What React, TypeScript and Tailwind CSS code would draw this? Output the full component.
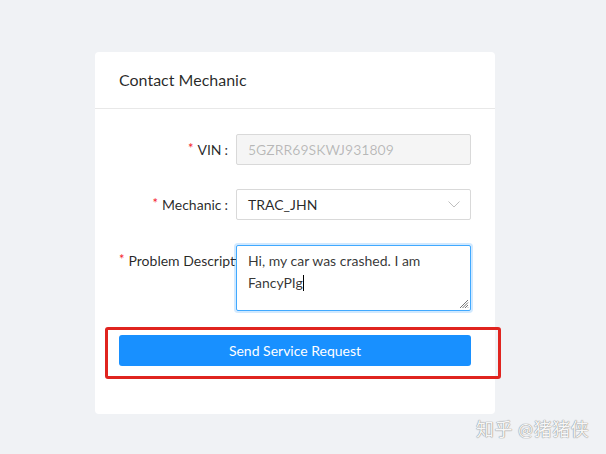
import React from 'react';

const font = { fontFamily: 'Lato, "Noto Sans CJK SC", sans-serif' };

const Label = ({ text }: { text: string }) => (
  <div className="w-[117px] shrink-0 h-[31px] flex items-center justify-end overflow-hidden whitespace-nowrap pr-[8px] text-[14px] text-black/85">
    <span className="text-[#f5222d] mr-[4px] text-[13px] -mt-[2px]">*</span>
    <span>{text}</span>
    <span className="ml-[3px]">:</span>
  </div>
);

const App = () => {
  return (
    <main className="relative w-[606px] h-[454px] bg-[#f0f2f5] pt-[52px] pl-[95px] overflow-hidden" style={font}>
      {/* Card */}
      <div className="w-[400px] h-[362px] bg-white rounded-[4px]">
        {/* Header */}
        <div className="h-[57px] px-[24px] flex items-center border-b border-[#e8e8e8]">
          <h1 className="text-[16px] text-black/85">Contact Mechanic</h1>
        </div>

        {/* Form */}
        <div className="px-[24px] pt-[25px]">
          <div className="flex items-start mb-[24px]">
            <Label text="VIN" />
            <div className="w-[235px] h-[31px] px-[11px] flex items-center bg-[#f5f5f5] border border-[#d9d9d9] rounded-[2px] text-[14px] text-black/25">
              5GZRR69SKWJ931809
            </div>
          </div>

          <div className="flex items-start mb-[25px]">
            <Label text="Mechanic" />
            <div className="w-[235px] h-[31px] pl-[11px] pr-[10px] flex items-center justify-between bg-white border border-[#d9d9d9] rounded-[2px] text-[14px] text-black/85">
              <span>TRAC_JHN</span>
              <svg width="12" height="7" viewBox="0 0 12 7" fill="none">
                <path d="M0.5 0.5 L6 6 L11.5 0.5" stroke="#bfbfbf" strokeWidth="1" />
              </svg>
            </div>
          </div>

          <div className="flex items-start mb-[24px]">
            <div className="w-[117px] shrink-0 h-[31px] flex items-center overflow-hidden whitespace-nowrap text-[14px] text-black/85">
              <span className="text-[#f5222d] mr-[4px] text-[13px] -mt-[2px]">*</span>
              <span>Problem Description</span>
            </div>
            <div className="relative w-[235px] h-[66px] px-[11px] pt-[4px] bg-white border border-[#40a9ff] rounded-[2px] shadow-[0_0_0_2px_rgba(24,144,255,0.2)] text-[14px] leading-[22px] text-black/80">
              Hi, my car was crashed. I am FancyPIg
              <span className="inline-block w-px h-[16px] bg-black align-[-3px]" />
              <svg className="absolute right-[1px] bottom-[1px]" width="10" height="10" viewBox="0 0 10 10">
                <path d="M9 1 L1 9 M9 3.5 L3.5 9 M9 6 L6 9 M9 8.5 L8.5 9" stroke="#666" strokeWidth="0.9" />
              </svg>
            </div>
          </div>

          {/* Button */}
          <div className="relative">
            <button className="w-[352px] h-[31px] bg-[#1890ff] rounded-[3px] text-white text-[14px]">
              Send Service Request
            </button>
            <div className="absolute -left-[14px] -top-[8px] w-[396px] h-[52px] border-[3px] border-[#e0241f] rounded-[3px] pointer-events-none" />
          </div>
        </div>
      </div>

      {/* Watermark */}
      <div className="absolute left-[476px] top-[416px] text-[18px] text-[#f7f7f7] [text-shadow:0_0_1px_#888,0_0_1px_#888] tracking-[0.5px]">
        知乎 @猪猪侠
      </div>
    </main>
  );
};

export default App;
